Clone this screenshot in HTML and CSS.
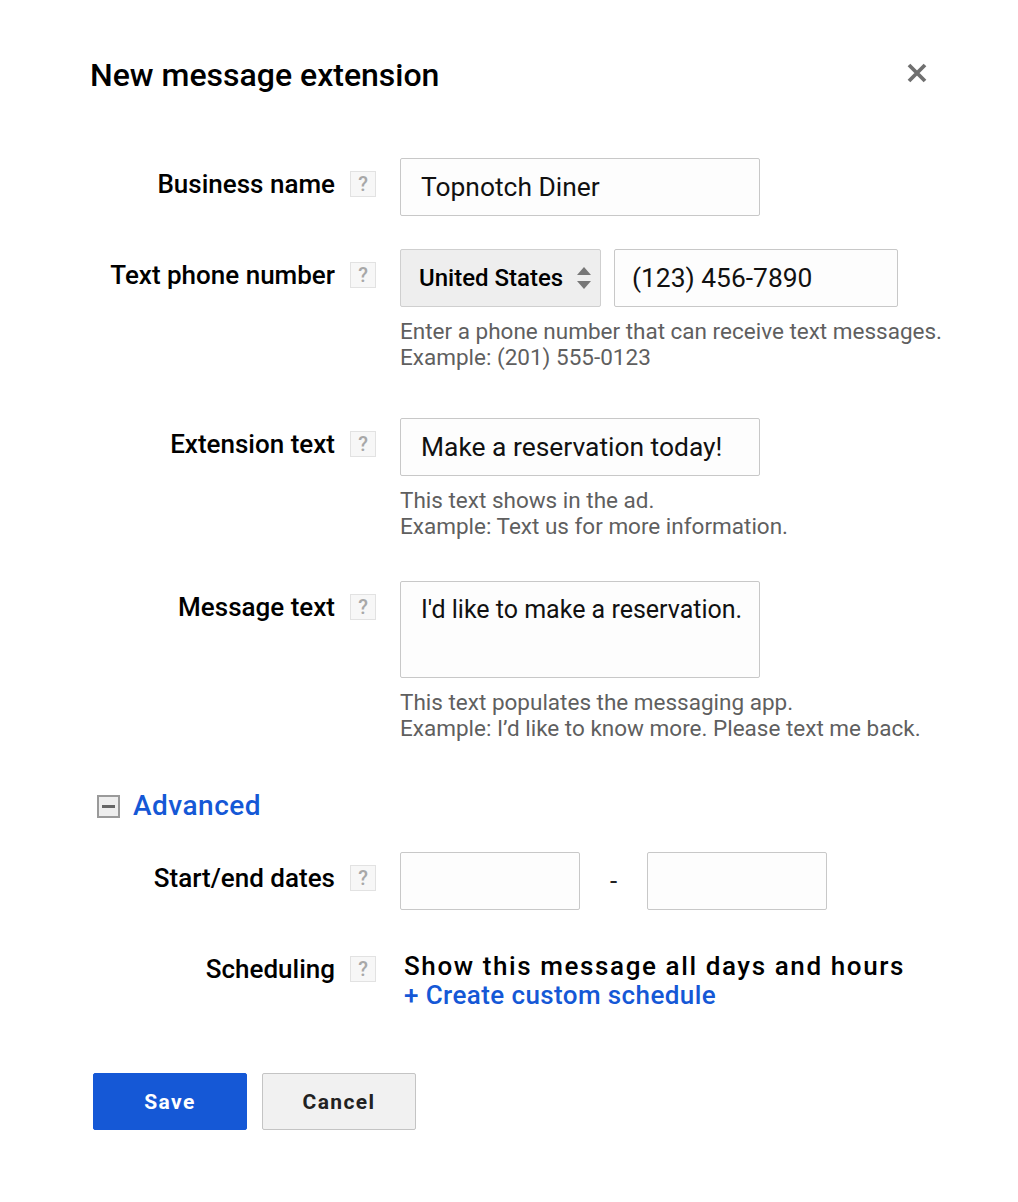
FILE: index.html
```html
<!DOCTYPE html>
<html>
<head>
    <meta charset="utf-8">
    <link rel="stylesheet" href="styles.css">
</head>
<body>
    <div class="dialog">
        <div class="header">
            <h1>New message extension</h1>
            <span class="close">
                <svg width="22" height="22" viewBox="0 0 22 22"><path d="M3 3 L19 19 M19 3 L3 19" stroke="#6f6f6f" stroke-width="3.8" stroke-linecap="butt"/></svg>
            </span>
        </div>

        <div class="row">
            <label class="field-label">Business name</label>
            <span class="help">?</span>
            <div class="field">
                <div class="input wide">Topnotch Diner</div>
            </div>
        </div>

        <div class="row phone-row">
            <label class="field-label">Text phone number</label>
            <span class="help">?</span>
            <div class="field">
                <div class="inline">
                    <div class="select">United States
                        <svg class="arrows" width="16" height="26" viewBox="0 0 16 26"><path d="M8 2 L15 10 L1 10 Z M8 24 L15 16 L1 16 Z" fill="#777"/></svg>
                    </div>
                    <div class="input phone">(123) 456-7890</div>
                </div>
                <div class="hint">Enter a phone number that can receive text messages.<br>Example: (201) 555-0123</div>
            </div>
        </div>

        <div class="row ext-row">
            <label class="field-label">Extension text</label>
            <span class="help">?</span>
            <div class="field">
                <div class="input wide">Make a reservation today!</div>
                <div class="hint">This text shows in the ad.<br>Example: Text us for more information.</div>
            </div>
        </div>

        <div class="row">
            <label class="field-label">Message text</label>
            <span class="help">?</span>
            <div class="field">
                <div class="input wide textarea">I'd like to make a reservation.</div>
                <div class="hint">This text populates the messaging app.<br>Example: I’d like to know more. Please text me back.</div>
            </div>
        </div>

        <div class="advanced">
            <span class="collapse"><span class="bar"></span></span>
            <a class="link">Advanced</a>
        </div>

        <div class="row">
            <label class="field-label">Start/end dates</label>
            <span class="help">?</span>
            <div class="field">
                <div class="inline dates">
                    <div class="input date"></div>
                    <span class="dash">-</span>
                    <div class="input date"></div>
                </div>
            </div>
        </div>

        <div class="row schedule-row">
            <label class="field-label">Scheduling</label>
            <span class="help">?</span>
            <div class="field schedule">
                <div class="schedule-text">Show this message all days and hours</div>
                <a class="link small">+ Create custom schedule</a>
            </div>
        </div>

        <div class="buttons">
            <button class="btn primary">Save</button>
            <button class="btn">Cancel</button>
        </div>
    </div>
</body>
</html>
```

FILE: styles.css
```css
body {
    margin: 0;
    font-family: Roboto, "Liberation Sans", sans-serif;
    background: #fff;
    color: #000;
}

.dialog {
    width: 1018px;
    padding: 53px 0 0 90px;
    box-sizing: border-box;
}

.header {
    display: flex;
    align-items: center;
    justify-content: space-between;
    width: 838px;
    margin-bottom: 61px;
}

.header h1 {
    margin: 0;
    font-size: 32px;
    font-weight: 500;
    line-height: 44px;
}

.close {
    display: flex;
    margin-top: -4px;
}

.row {
    display: flex;
    align-items: flex-start;
    margin-bottom: 33px;
}

.phone-row {
    margin-bottom: 36px;
}

.ext-row {
    margin-bottom: 30px;
}

.field-label {
    width: 245px;
    text-align: right;
    font-size: 26px;
    font-weight: 500;
    line-height: 30px;
    padding-top: 11px;
}

.help {
    width: 26px;
    height: 26px;
    margin: 13px 24px 0 15px;
    border: 1px solid #e2e2e2;
    background: #f7f7f7;
    box-sizing: border-box;
    color: #a8a8a8;
    font-size: 20px;
    font-weight: 500;
    line-height: 24px;
    text-align: center;
    flex-shrink: 0;
}

.field {
    display: flex;
    flex-direction: column;
}

.inline {
    display: flex;
    align-items: center;
    gap: 13px;
}

.input {
    height: 58px;
    box-sizing: border-box;
    border: 1px solid #c8c8c8;
    border-radius: 2px;
    background: #fdfdfd;
    padding: 0 20px;
    font-size: 26.4px;
    line-height: 56px;
    color: #111;
    white-space: nowrap;
}

.wide {
    width: 360px;
}

.textarea {
    height: 97px;
    font-size: 25px;
    line-height: 30px;
    padding-top: 13px;
}

.phone {
    width: 284px;
    padding-left: 17px;
}

.select {
    width: 201px;
    height: 58px;
    box-sizing: border-box;
    border: 1px solid #cfcfcf;
    border-radius: 2px;
    background: #eee;
    padding: 0 8px 0 18px;
    display: flex;
    align-items: center;
    justify-content: space-between;
    font-size: 24px;
    font-weight: 500;
}

.hint {
    margin: 11px 0 12px;
    font-size: 22.5px;
    line-height: 26px;
    color: #5f5f5f;
}

.advanced {
    display: flex;
    align-items: center;
    gap: 13px;
    margin: 37px 0 30px 7px;
}

.collapse {
    width: 23px;
    height: 23px;
    box-sizing: border-box;
    border: 2px solid #9a9a9a;
    background: #eee;
    display: flex;
    align-items: center;
    justify-content: center;
}

.collapse .bar {
    width: 13px;
    height: 3px;
    background: #666;
}

.link {
    color: #1558d6;
    font-size: 28px;
    font-weight: 500;
    letter-spacing: 0.5px;
    line-height: 32px;
}

.link.small {
    font-size: 26px;
    letter-spacing: 0.4px;
    line-height: 28px;
}

.date {
    width: 180px;
}

.dates {
    gap: 0;
}

.dash {
    width: 67px;
    text-align: center;
    font-size: 26px;
    color: #222;
}

.schedule-row {
    margin-top: 10px;
}

.schedule {
    padding-top: 8px;
    margin-left: 4px;
}

.schedule-text {
    font-size: 26px;
    font-weight: 500;
    letter-spacing: 1.6px;
    line-height: 30px;
}

.buttons {
    display: flex;
    gap: 15px;
    margin-top: 64px;
    padding-left: 3px;
}

.btn {
    width: 154px;
    height: 57px;
    border: 1px solid #c4c4c4;
    border-radius: 2px;
    background: #f1f1f1;
    color: #222;
    font-family: Roboto, "Liberation Sans", sans-serif;
    font-size: 21px;
    font-weight: 700;
    letter-spacing: 1.4px;
}

.btn.primary {
    background: #1558d6;
    border-color: #1558d6;
    color: #fff;
}
```
